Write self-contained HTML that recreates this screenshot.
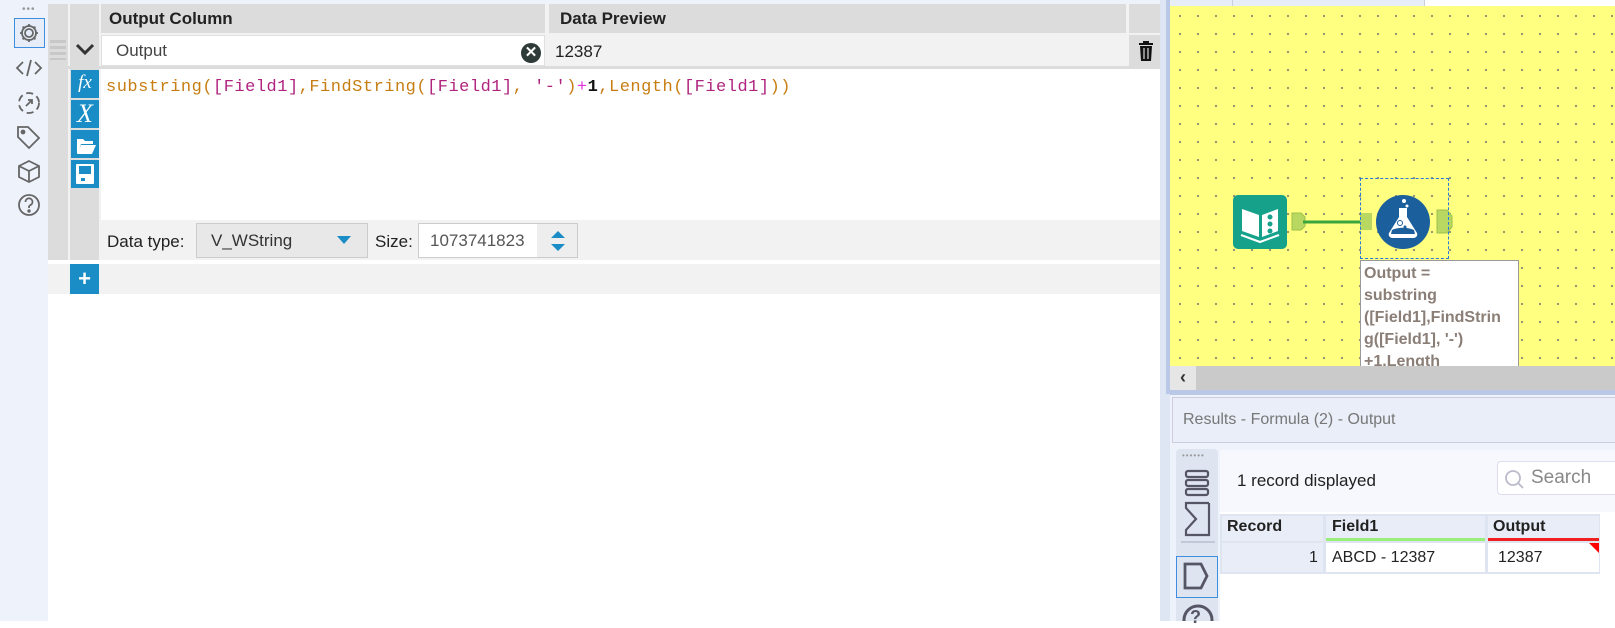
<!DOCTYPE html>
<html><head><meta charset="utf-8"><style>
*{margin:0;padding:0;box-sizing:border-box}
body{width:1615px;height:621px;position:relative;overflow:hidden;background:#fff;font-family:"Liberation Sans",sans-serif}
.a{position:absolute}
.t{font-size:16px;color:#222;white-space:nowrap}
.bi{background:#1a8cc6;width:28px;height:28px;color:#fff}
</style></head><body>
<div class="a" style="left:0;top:0;width:48px;height:621px;background:#eef2fb"></div>
<div class="a" style="left:22px;top:4px;color:#999;font-size:10px;letter-spacing:1px">•••</div>
<div class="a" style="left:14px;top:18px;width:31px;height:30px;border:1px solid #3b8ee0;background:#e6ecf8"></div>
<svg class="a" style="left:0;top:0" width="48" height="230" fill="none" stroke="#666" stroke-width="1.8">
<circle cx="29" cy="33" r="4"/><path d="M29 24v3M29 39v3M20 33h3M35 33h3M22.6 26.6l2.1 2.1M33.3 37.3l2.1 2.1M22.6 39.4l2.1-2.1M33.3 28.7l2.1-2.1"/><circle cx="29" cy="33" r="7"/>
<path d="M23 62l-6 6 6 6M35 62l6 6-6 6M31 60l-4 16"/>
<circle cx="29" cy="103" r="10" stroke-dasharray="7 4"/><path d="M26 106l6-6M28 100h4v4"/>
<path d="M18 127v10l11 11 10-10-11-11z"/><circle cx="23" cy="132" r="1.5" fill="#666"/>
<path d="M29 161l10 5v11l-10 5-10-5v-11zM19 166l10 5 10-5M29 171v11"/>
<circle cx="29" cy="205" r="10"/><path d="M25.5 202a3.5 3.5 0 1 1 5 3c-1.5.8-1.5 1.5-1.5 3"/><circle cx="29" cy="211" r="0.8" fill="#666"/>
</svg>
<div class="a" style="left:48px;top:0;width:1112px;height:4px;background:#eef2fb"></div>
<div class="a" style="left:48px;top:4px;width:1112px;height:290px;background:#f2f2f2"></div>
<div class="a" style="left:48px;top:4px;width:20px;height:256px;background:#dcdcdc"></div>
<div class="a" style="left:70px;top:4px;width:29px;height:256px;background:#dcdcdc"></div>
<div class="a" style="left:101px;top:4px;width:444px;height:29px;background:#dcdcdc"></div>
<div class="a" style="left:549px;top:4px;width:577px;height:29px;background:#dcdcdc"></div>
<div class="a" style="left:1129px;top:4px;width:31px;height:29px;background:#dcdcdc"></div>
<div class="a t" style="left:109px;top:9px;font-weight:bold;font-size:17px">Output Column</div>
<div class="a t" style="left:560px;top:9px;font-weight:bold;font-size:17px">Data Preview</div>
<div class="a" style="left:50px;top:40px;width:16px;height:20px;background:repeating-linear-gradient(#c8c8c8 0 3px,transparent 3px 6px)"></div>
<svg class="a" style="left:74px;top:42px" width="22" height="14"><path d="M3 3l8 8 8-8" stroke="#333" stroke-width="3" fill="none"/></svg>
<div class="a" style="left:101px;top:35px;width:444px;height:31px;background:#fff;border:1px solid #e0e0e0"></div>
<div class="a t" style="left:116px;top:41px;font-size:17px;color:#444">Output</div>
<div class="a" style="left:521px;top:43px;width:20px;height:20px;border-radius:50%;background:#2f3b38;color:#fff;font-size:15px;font-weight:bold;text-align:center;line-height:20px">✕</div>
<div class="a t" style="left:555px;top:42px;font-size:17px">12387</div>
<div class="a" style="left:1129px;top:35px;width:31px;height:31px;background:#dcdcdc"></div>
<svg class="a" style="left:1136px;top:39px" width="20" height="24"><path d="M3 5h14M8 5V3h4v2" stroke="#111" stroke-width="2" fill="none"/><path d="M4 7h12l-1 15H5z" fill="#111"/><path d="M8 9v11M12 9v11" stroke="#dcdcdc" stroke-width="1.2"/></svg>
<div class="a" style="left:48px;top:66px;width:1112px;height:3px;background:#dcdcdc"></div>
<div class="a" style="left:101px;top:69px;width:1059px;height:151px;background:#fff"></div>
<div class="a bi" style="left:71px;top:70px;font-family:'Liberation Serif',serif;font-style:italic;font-size:19px;text-align:center;line-height:26px">fx</div>
<div class="a bi" style="left:71px;top:100px;font-family:'Liberation Serif',serif;font-style:italic;font-size:26px;text-align:center;line-height:28px">X</div>
<div class="a bi" style="left:71px;top:130px"><svg width="28" height="28"><path d="M6 9h6l2 2h8v3H10l-3 9H6z" fill="#fff"/><path d="M10 15h15l-4 9H6z" fill="#fff"/></svg></div>
<div class="a bi" style="left:71px;top:160px"><svg width="28" height="28"><rect x="5" y="4" width="18" height="20" rx="1" fill="#fff"/><rect x="8" y="6" width="12" height="8" fill="#1a8cc6"/><rect x="10" y="18" width="4" height="3" fill="#1a8cc6"/></svg></div>
<div class="a" style="left:106px;top:78px;font-family:'Liberation Mono',monospace;font-size:17px;letter-spacing:0.5px;white-space:nowrap;color:#c77d12"><span>substring(</span><span style="color:#b0247f">[Field1]</span>,FindString(<span style="color:#b0247f">[Field1]</span>, <span style="color:#b0247f">'-'</span>)<span style="color:#e02fe0">+</span><span style="color:#111;font-weight:bold">1</span>,Length(<span style="color:#b0247f">[Field1]</span>))</div>
<div class="a t" style="left:107px;top:232px;font-size:17px">Data type:</div>
<div class="a" style="left:196px;top:223px;width:172px;height:35px;background:#e8e8e8;border:1px solid #ccc"></div>
<div class="a t" style="left:211px;top:231px;font-size:17px;color:#333">V_WString</div>
<svg class="a" style="left:336px;top:235px" width="16" height="10"><path d="M1 1h14l-7 8z" fill="#1a8cc6"/></svg>
<div class="a t" style="left:375px;top:232px;font-size:17px">Size:</div>
<div class="a" style="left:418px;top:223px;width:160px;height:35px;background:#fff;border:1px solid #ccc"></div>
<div class="a" style="left:537px;top:224px;width:40px;height:33px;background:#eee"></div>
<div class="a t" style="left:430px;top:231px;font-size:17px;color:#555">1073741823</div>
<svg class="a" style="left:548px;top:228px" width="20" height="26"><path d="M3 10l7-7 7 7z M3 16l7 7 7-7z" fill="#1a8cc6"/></svg>
<div class="a" style="left:48px;top:260px;width:1112px;height:4px;background:#fff"></div>
<div class="a" style="left:70px;top:264px;width:29px;height:30px;background:#1a8cc6;color:#fff;font-weight:bold;font-size:22px;text-align:center;line-height:29px">+</div>
<div class="a" style="left:1160px;top:0;width:10px;height:621px;background:#dfe6f3"></div>
<div class="a" style="left:1166px;top:0;width:4px;height:394px;background:#b8c8e6"></div>
<div class="a" style="left:1170px;top:0;width:255px;height:6px;background:#e8eef8;border-right:1px solid #c8d0e0"></div>
<div class="a" style="left:1232px;top:0;width:1px;height:6px;background:#c8d0e0"></div>
<div class="a" style="left:1170px;top:6px;width:445px;height:360px;background-color:#ffff80;background-image:radial-gradient(circle,#8a8a70 0.9px,transparent 1.3px);background-size:18px 18px;background-position:1px 1px"></div>
<div class="a" style="left:1233px;top:195px;width:54px;height:54px;background:#16a28a;border-radius:5px"></div>
<svg class="a" style="left:1233px;top:195px" width="54" height="54"><path d="M9 14l17 6v22L9 36z M29 20l16-6v22l-16 6z" fill="#fff"/><circle cx="37" cy="22" r="2.5" fill="#16a28a"/><circle cx="37" cy="29" r="2.5" fill="#16a28a"/><circle cx="37" cy="36" r="2.5" fill="#16a28a"/><path d="M8 40l19 7 19-7" stroke="#fff" stroke-width="2" fill="none"/></svg>
<svg class="a" style="left:1290px;top:205px" width="170" height="35"><path d="M2 8h9l4 4v9l-4 4H2z" fill="#b8d862" stroke="#9cc04a"/><path d="M13 17h58" stroke="#3aa53a" stroke-width="3"/><rect x="70" y="8" width="12" height="17" fill="#b8d862"/><path d="M147 5h10l5 6v11l-5 6h-10z" fill="#b8d862" stroke="#9cc04a"/></svg>
<div class="a" style="left:1360px;top:178px;width:89px;height:81px;border:1px dashed #2a7ad8"></div>
<svg class="a" style="left:1375px;top:194px" width="56" height="56"><circle cx="28" cy="28" r="27" fill="#1b5f9c"/><path d="M24 14h8v9l10 16c1 3-1 5-4 5H18c-3 0-5-2-4-5l10-16z" fill="#fff"/><path d="M17 36c6-3 16-3 22 0l1 4H16z" fill="#1b5f9c"/><circle cx="25" cy="29" r="2.5" stroke="#1b5f9c" fill="none"/><circle cx="30" cy="33" r="1.5" fill="#1b5f9c"/><circle cx="29" cy="7" r="2" fill="#fff"/><circle cx="32" cy="12" r="1.5" fill="#fff"/></svg>
<div class="a" style="left:1360px;top:260px;width:159px;height:106px;background:#fff;border:1px solid #999;border-bottom:none;overflow:hidden"><div style="padding:2px 3px;font-weight:bold;font-size:16px;line-height:22px;color:#8a7e76">Output =<br>substring<br>([Field1],FindStrin<br>g([Field1], '-')<br>+1,Length</div></div>
<div class="a" style="left:1170px;top:366px;width:445px;height:24px;background:#cacaca"></div>
<div class="a" style="left:1170px;top:366px;width:26px;height:24px;background:#e6e6e6;font-size:18px;font-weight:bold;color:#333;text-align:center;line-height:22px">‹</div>
<div class="a" style="left:1170px;top:390px;width:445px;height:5px;background:#b8c8e6"></div>
<div class="a" style="left:1170px;top:395px;width:445px;height:226px;background:#eef2fb"></div>
<div class="a" style="left:1172px;top:397px;width:443px;height:46px;background:#e9eef8;border:1px solid #ccd;border-right:none"></div>
<div class="a t" style="left:1183px;top:411px;font-size:16px;color:#777">Results - Formula (2) - Output</div>
<div class="a" style="left:1176px;top:449px;width:42px;height:172px;background:#dfe5f0;border-radius:4px 4px 0 0"></div>
<div class="a" style="left:1182px;top:451px;color:#999;font-size:8px;letter-spacing:1px">••••••</div>
<div class="a" style="left:1176px;top:556px;width:42px;height:42px;border:1.5px solid #3b8ee0"></div>
<svg class="a" style="left:1176px;top:460px" width="44" height="161" fill="none" stroke="#556" stroke-width="2.2"><rect x="10" y="11" width="22" height="6" rx="2"/><rect x="10" y="20" width="22" height="6" rx="2"/><rect x="10" y="29" width="22" height="6" rx="2"/><path d="M33 43H10v5l10 11-10 11v5h23V43"/><path d="M5 82h34" stroke="#aab" stroke-width="1"/><path d="M9 104h16l6 12-6 12H9z" stroke-width="2.8"/><circle cx="22" cy="160" r="14" stroke-width="3"/></svg>
<div class="a" style="left:1190px;top:607px;font-weight:bold;font-size:18px;color:#556">?</div>
<div class="a" style="left:1220px;top:450px;width:395px;height:171px;background:#fff"></div>
<div class="a" style="left:1220px;top:450px;width:395px;height:62px;background:#f6f8fd"></div>
<div class="a t" style="left:1237px;top:471px;font-size:17px">1 record displayed</div>
<div class="a" style="left:1497px;top:461px;width:130px;height:34px;background:#fff;border:1px solid #dde;border-radius:4px"></div>
<svg class="a" style="left:1503px;top:468px" width="22" height="22" fill="none" stroke="#bbc" stroke-width="1.8"><circle cx="10" cy="10" r="7"/><path d="M15 15l5 5"/></svg>
<div class="a t" style="left:1531px;top:467px;font-size:19px;color:#888">Search</div>
<div class="a" style="left:1220px;top:514px;width:380px;height:60px;background:#dfe5f0"></div>
<div class="a" style="left:1222px;top:516px;width:101px;height:25px;background:#e8edf7"></div>
<div class="a" style="left:1326px;top:516px;width:159px;height:25px;background:#e8edf7;border-bottom:3px solid #98f07a"></div>
<div class="a" style="left:1488px;top:516px;width:111px;height:25px;background:#e8edf7;border-bottom:3px solid #f02020"></div>
<div class="a t" style="left:1227px;top:518px;font-weight:bold">Record</div>
<div class="a t" style="left:1332px;top:518px;font-weight:bold">Field1</div>
<div class="a t" style="left:1493px;top:518px;font-weight:bold">Output</div>
<div class="a" style="left:1222px;top:543px;width:101px;height:29px;background:#e8edf7"></div>
<div class="a" style="left:1326px;top:543px;width:159px;height:29px;background:#fff"></div>
<div class="a" style="left:1488px;top:543px;width:111px;height:29px;background:#fff"></div>
<div class="a t" style="left:1309px;top:549px">1</div>
<div class="a t" style="left:1332px;top:549px">ABCD - 12387</div>
<div class="a t" style="left:1498px;top:549px">12387</div>
<svg class="a" style="left:1589px;top:543px" width="10" height="10"><path d="M0 0h10v10z" fill="#f00"/></svg>
</body></html>
